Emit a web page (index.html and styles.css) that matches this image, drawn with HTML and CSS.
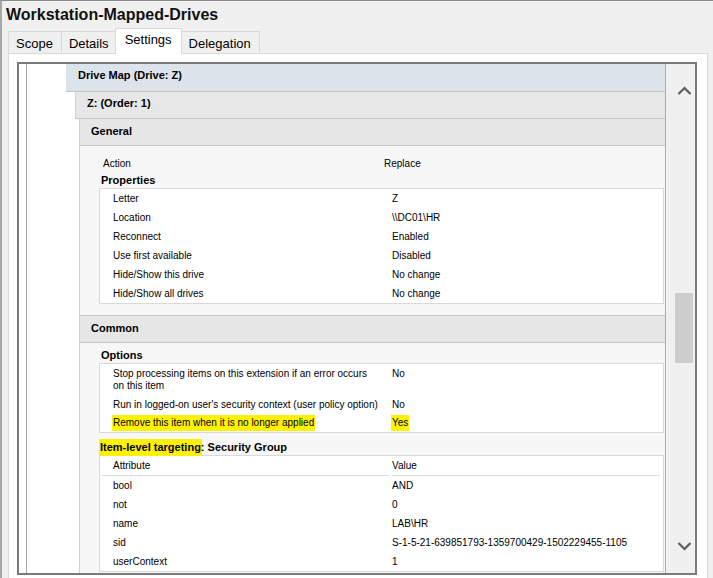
FILE: index.html
```html
<!DOCTYPE html>
<html lang="en">
<head>
    <meta charset="UTF-8">
    <title>Workstation-Mapped-Drives</title>
    <link rel="stylesheet" href="styles.css">
</head>
<body>

<div class="window">
    <h1 class="title">Workstation-Mapped-Drives</h1>

    <div class="tabs">
        <div class="tab">Scope</div>
        <div class="tab">Details</div>
        <div class="tab tab-active">Settings</div>
        <div class="tab">Delegation</div>
    </div>

    <div class="page">
        <div class="report">
            <div class="report-view">
                <div class="tree">
                    <div class="hdr hdr-drive">Drive Map (Drive: Z)</div>
                    <div class="item">
                        <div class="hdr hdr-item">Z: (Order: 1)</div>
                        <div class="group">
                            <div class="hdr hdr-group">General</div>
                            <div class="group-body general">
                                <div class="pair">
                                    <div class="pair-name">Action</div>
                                    <div>Replace</div>
                                </div>
                                <div class="label">Properties</div>
                                <div class="box">
                                    <div class="row"><div class="cell-name">Letter</div><div>Z</div></div>
                                    <div class="row"><div class="cell-name">Location</div><div>\\DC01\HR</div></div>
                                    <div class="row"><div class="cell-name">Reconnect</div><div>Enabled</div></div>
                                    <div class="row"><div class="cell-name">Use first available</div><div>Disabled</div></div>
                                    <div class="row"><div class="cell-name">Hide/Show this drive</div><div>No change</div></div>
                                    <div class="row"><div class="cell-name">Hide/Show all drives</div><div>No change</div></div>
                                </div>
                            </div>

                            <div class="hdr hdr-group">Common</div>
                            <div class="group-body common">
                                <div class="label">Options</div>
                                <div class="box">
                                    <div class="row"><div class="cell-name">Stop processing items on this extension if an error occurs<br>on this item</div><div>No</div></div>
                                    <div class="row"><div class="cell-name">Run in logged-on user's security context (user policy option)</div><div>No</div></div>
                                    <div class="row row-tight"><div class="cell-name"><span class="hl">Remove this item when it is no longer applied</span></div><div><span class="hl">Yes</span></div></div>
                                </div>

                                <div class="label label-filter"><span class="hl">Item-level targeting</span>: Security Group</div>
                                <div class="box">
                                    <div class="row row-head">
                                        <div class="head-name">Attribute</div>
                                        <div class="head-value">Value</div>
                                    </div>
                                    <div class="row"><div class="cell-name">bool</div><div>AND</div></div>
                                    <div class="row"><div class="cell-name">not</div><div>0</div></div>
                                    <div class="row"><div class="cell-name">name</div><div>LAB\HR</div></div>
                                    <div class="row"><div class="cell-name">sid</div><div>S-1-5-21-639851793-1359700429-1502229455-1105</div></div>
                                    <div class="row"><div class="cell-name">userContext</div><div>1</div></div>
                                </div>
                            </div>
                        </div>
                    </div>
                </div>
            </div>

            <div class="scrollbar">
                <div class="sb-btn sb-up">
                    <svg width="15" height="9" viewBox="0 0 15 9"><polyline points="1.5,8 7.5,2 13.5,8" fill="none" stroke="#5c5c5c" stroke-width="2.2"/></svg>
                </div>
                <div class="sb-track"><div class="sb-thumb"></div></div>
                <div class="sb-btn sb-down">
                    <svg width="15" height="9" viewBox="0 0 15 9"><polyline points="1.5,1 7.5,7 13.5,1" fill="none" stroke="#5c5c5c" stroke-width="2.2"/></svg>
                </div>
            </div>
        </div>
    </div>
</div>

</body>
</html>
```

FILE: styles.css
```css
body {
    margin: 0;
    background-color: #f0f0f0;
    font-family: "Liberation Sans", Arial, sans-serif;
    color: #000;
}
.window {
    height: 578px;
    box-sizing: border-box;
    border-top: 1px solid #8c8c8c;
    border-left: 2px solid #a8a8a8;
    overflow: hidden;
}
.title {
    margin: 0;
    height: 27px;
    box-sizing: border-box;
    padding: 4px 0 0 4px;
    font-size: 16px;
    line-height: 20px;
    font-weight: bold;
    color: #111;
}

/* tabs */
.tabs {
    display: flex;
    align-items: flex-end;
    height: 25px;
    margin-left: 6px;
}
.tab {
    height: 22px;
    box-sizing: border-box;
    padding: 0 8px 0 7px;
    margin-right: -1px;
    border: 1px solid #d9d9d9;
    border-bottom: none;
    background-color: #f0f0f0;
    font-size: 13px;
    line-height: 23px;
}
.tab-active {
    position: relative;
    z-index: 1;
    height: 26px;
    margin: 0 -1px -1px -2px;
    padding: 0 9px;
    background-color: #fff;
    line-height: 21px;
}
.page {
    width: 700px;
    height: 600px;
    box-sizing: border-box;
    margin-left: 6px;
    padding: 8px 10px 0 8px;
    background-color: #fff;
    border: 1px solid #d9d9d9;
}

/* report frame */
.report {
    display: flex;
    height: 513px;
    box-sizing: border-box;
    border: 2px solid #7a7a7a;
}
.report-view {
    flex: 1;
    overflow: hidden;
    padding-left: 7px;
    background-color: #fff;
    border-right: 1px solid #ababab;
}
.tree {
    height: 100%;
    padding-left: 39px;
    border-left: 1px solid #a3a3a3;
}
.hdr {
    box-sizing: border-box;
    padding-top: 4px;
    font-size: 11px;
    line-height: 14px;
    font-weight: bold;
    border-bottom: 1px solid #c6c6c6;
}
.hdr-drive {
    height: 28px;
    padding-left: 12px;
    background-color: #dbe4eb;
}
.item {
    margin-left: 9px;
}
.hdr-item {
    height: 27px;
    padding-left: 11px;
    background-color: #e7e7e7;
    border-left: 1px solid #d4d4d4;
}
.group {
    margin-left: 4px;
    border-left: 1px solid #cfcfcf;
}
.hdr-group {
    height: 27px;
    padding: 5px 0 0 11px;
    background-color: #e6e6e6;
}
.group-body {
    padding: 9px 1px 11px 19px;
    background-color: #f7f7f7;
    border-bottom: 1px solid #c6c6c6;
    font-size: 10px;
}
.common {
    padding-top: 6px;
    border-bottom: none;
}
.pair {
    display: flex;
    height: 18px;
    line-height: 18px;
}
.pair-name {
    width: 281px;
    padding-left: 4px;
}
.label {
    padding-left: 2px;
    height: 15px;
    font-size: 11px;
    line-height: 15px;
    font-weight: bold;
}
.common .label {
    height: 14px;
    line-height: 13px;
}
.label-filter {
    margin-top: 8px;
    padding-left: 1px;
}

/* property boxes */
.box {
    background-color: #fff;
    border: 1px solid #d9d9d9;
}
.row {
    display: grid;
    grid-template-columns: 292px 1fr;
    padding: 4px 0 3px;
    line-height: 12px;
}
.row-tight {
    padding: 3px 0;
}
.cell-name {
    padding-left: 13px;
    white-space: nowrap;
}
.row-head {
    padding: 0;
}
.head-name,
.head-value {
    padding: 4px 0 3px;
    border-bottom: 1px solid #dcdcdc;
}
.head-name {
    margin: 0 3px 0 2px;
    padding-left: 11px;
}
.head-value {
    margin-right: 3px;
}
.hl {
    background-color: #fff200;
    padding: 2px 1px 3px;
    margin: 0 -1px;
}

/* scrollbar */
.scrollbar {
    width: 21px;
    padding-left: 8px;
    display: flex;
    flex-direction: column;
    background-color: #f0f0f0;
}
.sb-btn {
    display: flex;
    align-items: center;
    justify-content: center;
}
.sb-up {
    height: 52px;
}
.sb-down {
    height: 54px;
}
.sb-track {
    flex: 1;
    padding-top: 177px;
}
.sb-thumb {
    height: 70px;
    margin: 0 2px 0 1px;
    background-color: #cdcdcd;
}
```
